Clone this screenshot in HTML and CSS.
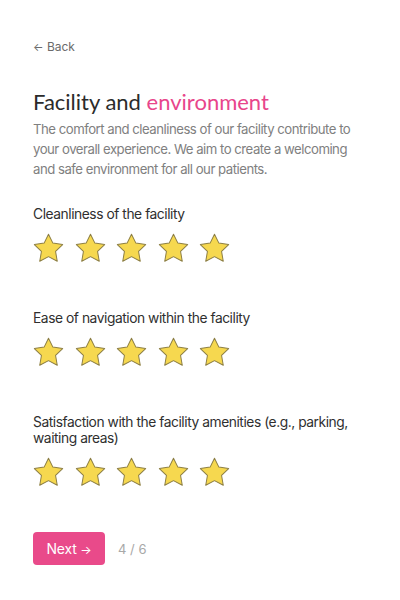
FILE: index.html
```html
<!DOCTYPE html>
<html>
<head>
<meta charset="utf-8">
<link rel="stylesheet" href="styles.css">
</head>
<body>
<main class="page">
  <a class="back" href="#"><span class="back-arrow">←</span> Back</a>
  <h1 class="title">Facility and <span class="accent">environment</span></h1>
  <p class="intro">The comfort and cleanliness of our facility contribute to your overall experience. We aim to create a welcoming and safe environment for all our patients.</p>

  <section class="question">
    <h2 class="label">Cleanliness of the facility</h2>
    <div class="stars">
      <svg class="star" viewBox="0 0 24 24"><path d="M12 2.2l3 6.1 6.7 1-4.85 4.75 1.15 6.7L12 17.6l-6 3.150 1.15-6.7L2.3 9.3l6.7-1z"/></svg>
      <svg class="star" viewBox="0 0 24 24"><path d="M12 2.2l3 6.1 6.7 1-4.85 4.75 1.15 6.7L12 17.6l-6 3.150 1.15-6.7L2.3 9.3l6.7-1z"/></svg>
      <svg class="star" viewBox="0 0 24 24"><path d="M12 2.2l3 6.1 6.7 1-4.85 4.75 1.15 6.7L12 17.6l-6 3.150 1.15-6.7L2.3 9.3l6.7-1z"/></svg>
      <svg class="star" viewBox="0 0 24 24"><path d="M12 2.2l3 6.1 6.7 1-4.85 4.75 1.15 6.7L12 17.6l-6 3.150 1.15-6.7L2.3 9.3l6.7-1z"/></svg>
      <svg class="star" viewBox="0 0 24 24"><path d="M12 2.2l3 6.1 6.7 1-4.85 4.75 1.15 6.7L12 17.6l-6 3.150 1.15-6.7L2.3 9.3l6.7-1z"/></svg>
    </div>
  </section>

  <section class="question">
    <h2 class="label">Ease of navigation within the facility</h2>
    <div class="stars">
      <svg class="star" viewBox="0 0 24 24"><path d="M12 2.2l3 6.1 6.7 1-4.85 4.75 1.15 6.7L12 17.6l-6 3.150 1.15-6.7L2.3 9.3l6.7-1z"/></svg>
      <svg class="star" viewBox="0 0 24 24"><path d="M12 2.2l3 6.1 6.7 1-4.85 4.75 1.15 6.7L12 17.6l-6 3.150 1.15-6.7L2.3 9.3l6.7-1z"/></svg>
      <svg class="star" viewBox="0 0 24 24"><path d="M12 2.2l3 6.1 6.7 1-4.85 4.75 1.15 6.7L12 17.6l-6 3.150 1.15-6.7L2.3 9.3l6.7-1z"/></svg>
      <svg class="star" viewBox="0 0 24 24"><path d="M12 2.2l3 6.1 6.7 1-4.85 4.75 1.15 6.7L12 17.6l-6 3.150 1.15-6.7L2.3 9.3l6.7-1z"/></svg>
      <svg class="star" viewBox="0 0 24 24"><path d="M12 2.2l3 6.1 6.7 1-4.85 4.75 1.15 6.7L12 17.6l-6 3.150 1.15-6.7L2.3 9.3l6.7-1z"/></svg>
    </div>
  </section>

  <section class="question">
    <h2 class="label">Satisfaction with the facility amenities (e.g., parking, waiting areas)</h2>
    <div class="stars">
      <svg class="star" viewBox="0 0 24 24"><path d="M12 2.2l3 6.1 6.7 1-4.85 4.75 1.15 6.7L12 17.6l-6 3.150 1.15-6.7L2.3 9.3l6.7-1z"/></svg>
      <svg class="star" viewBox="0 0 24 24"><path d="M12 2.2l3 6.1 6.7 1-4.85 4.75 1.15 6.7L12 17.6l-6 3.150 1.15-6.7L2.3 9.3l6.7-1z"/></svg>
      <svg class="star" viewBox="0 0 24 24"><path d="M12 2.2l3 6.1 6.7 1-4.85 4.75 1.15 6.7L12 17.6l-6 3.150 1.15-6.7L2.3 9.3l6.7-1z"/></svg>
      <svg class="star" viewBox="0 0 24 24"><path d="M12 2.2l3 6.1 6.7 1-4.85 4.75 1.15 6.7L12 17.6l-6 3.150 1.15-6.7L2.3 9.3l6.7-1z"/></svg>
      <svg class="star" viewBox="0 0 24 24"><path d="M12 2.2l3 6.1 6.7 1-4.85 4.75 1.15 6.7L12 17.6l-6 3.150 1.15-6.7L2.3 9.3l6.7-1z"/></svg>
    </div>
  </section>

  <footer class="footer">
    <button class="next" type="button">Next <span class="next-arrow">→</span></button>
    <span class="progress">4 / 6</span>
  </footer>
</main>
</body>
</html>
```

FILE: styles.css
```css
* { box-sizing: border-box; }
html, body { margin: 0; padding: 0; background: #fff; }
body {
  font-family: Inter, "Noto Sans", "Liberation Sans", sans-serif;
  color: #333;
}
.page {
  padding: 38px 33px 0 33px;
  display: flex;
  flex-direction: column;
}
.back {
  font-size: 12px;
  line-height: 18px;
  color: #6b6b6b;
  text-decoration: none;
  align-self: flex-start;
}
.back-arrow { font-size: 11px; }
.title {
  margin: 32px 0 0 0;
  font-family: Lato, "Noto Sans", sans-serif;
  font-weight: 400;
  font-size: 22px;
  line-height: 28px;
  color: #2b2b2b;
}
.accent { color: #e8458b; }
.intro {
  margin: 3px 0 0 0;
  font-size: 13.2px;
  letter-spacing: -0.5px;
  line-height: 20px;
  color: #808080;
}
.question {
  margin-top: 27px;
  display: flex;
  flex-direction: column;
}
.question + .question { margin-top: 44px; }
.label {
  margin: 0;
  font-weight: 400;
  font-size: 13.8px;
  letter-spacing: -0.45px;
  line-height: 16px;
  color: #2f2f2f;
}
.stars {
  margin-top: 9px;
  display: flex;
  gap: 6.5px;
  margin-left: -2px;
}
.star {
  width: 35px;
  height: 35px;
  display: block;
}
.star path {
  fill: #f6d84f;
  stroke: #8d7f45;
  stroke-width: 0.7;
  stroke-linejoin: round;
}
.footer {
  margin-top: 42px;
  display: flex;
  align-items: center;
  gap: 13px;
}
.next {
  font-family: Inter, "Noto Sans", sans-serif;
  background: #e94a8a;
  color: #fff;
  border: none;
  border-radius: 4px;
  height: 33px;
  width: 72px;
  font-size: 14px;
  letter-spacing: -0.2px;
  padding: 0;
}
.next-arrow { font-size: 12px; }
.progress {
  font-size: 13px;
  color: #a8a8a8;
}
```
